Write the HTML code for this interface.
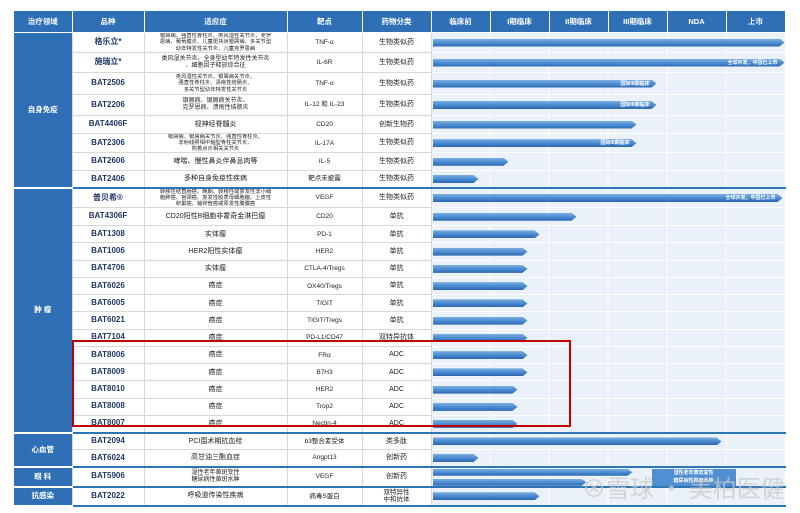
<!DOCTYPE html>
<html><head><meta charset="utf-8"><style>
*{margin:0;padding:0;box-sizing:border-box}
body{width:800px;height:513px;background:#fff;position:relative;overflow:hidden;font-family:"Liberation Sans","Noto Sans CJK SC",sans-serif;color:#1f3864}
table{position:absolute;left:14px;top:11px;border-collapse:collapse;table-layout:fixed;width:771px}
td{border:1px solid #d9d9d9;text-align:center;vertical-align:middle;font-size:7.5px;line-height:1.1;overflow:hidden;padding:0;white-space:nowrap}
th{background:#2e6fb5;color:#fff;font-size:7.5px;font-weight:bold;height:21px;border-right:1px solid #fff;border-bottom:1px solid #fff}
td.cat{background:#2e6fb5;color:#fff;font-weight:bold;font-size:7.5px;border:none;border-bottom:2px solid #fff}
td.n{font-weight:bold;font-size:8px;color:#1f3864}
td.i{color:#222;font-size:7px}
td.s{font-size:5.3px;line-height:1.15;color:#222}
td.t{color:#222;font-size:6.5px}
td.c{color:#222;font-size:7px}
td.st{background:#eaf1f8 repeating-linear-gradient(90deg,transparent 0,transparent 58px,#fff 58px,#fff 59px);position:relative;text-align:left;border-color:#fff}
tr.sep td{border-top:2px solid #2e75b6}
.b{position:absolute;left:1px;top:50%;margin-top:-4px;height:8px;background:linear-gradient(#79afe2,#3c7dc8 70%,#2e64a8);clip-path:polygon(0 0,calc(100% - 5px) 0,100% 50%,calc(100% - 5px) 100%,0 100%);color:#fff;font-size:5px;font-weight:bold;text-align:right;padding-right:7px;line-height:8px}
</style></head><body>
<table>
<colgroup><col style="width:58px"><col style="width:72px"><col style="width:143px"><col style="width:75px"><col style="width:69px"><col style="width:354px"></colgroup>
<tr><th>治疗领域</th><th>品种</th><th>适应症</th><th>靶点</th><th>药物分类</th>
<th style="padding:0"><div style="display:flex;height:21px;align-items:center"><span style="flex:1;border-right:1px solid #fff;line-height:21px">临床前</span><span style="flex:1;border-right:1px solid #fff;line-height:21px">I期临床</span><span style="flex:1;border-right:1px solid #fff;line-height:21px">II期临床</span><span style="flex:1;border-right:1px solid #fff;line-height:21px">III期临床</span><span style="flex:1;border-right:1px solid #fff;line-height:21px">NDA</span><span style="flex:1;line-height:21px">上市</span></div></th></tr>
<tr style="height:20px"><td class="cat" rowspan="8">自身免疫</td><td class="n">格乐立*</td><td class="s">银屑病、强直性脊柱炎、类风湿性关节炎、克罗<br>恩病、葡萄膜炎、儿童斑块状银屑病、多关节型<br>幼年特发性关节炎、儿童克罗恩病</td><td class="t">TNF-α</td><td class="c">生物类似药</td><td class="st"><div class="b" style="width:352px"></div></td></tr>
<tr style="height:20px"><td class="n">施瑞立*</td><td class="s" style="font-size:6px">类风湿关节炎、全身型幼年特发性关节炎<br>、细胞因子释放综合征</td><td class="t">IL-6R</td><td class="c">生物类似药</td><td class="st"><div class="b" style="width:352px">全球开发，中国已上市</div></td></tr>
<tr style="height:22px"><td class="n">BAT2506</td><td class="s">类风湿性关节炎、银屑病关节炎、<br>强直性脊柱炎、溃疡性结肠炎、<br>多关节型幼年特发性关节炎</td><td class="t">TNF-α</td><td class="c">生物类似药</td><td class="st"><div class="b" style="width:224px">国际III期临床</div></td></tr>
<tr style="height:21px"><td class="n">BAT2206</td><td class="s" style="font-size:6px">银屑病、银屑病关节炎、<br>克罗恩病、溃疡性结肠炎</td><td class="t">IL-12 和 IL-23</td><td class="c">生物类似药</td><td class="st"><div class="b" style="width:224px">国际III期临床</div></td></tr>
<tr style="height:18px"><td class="n">BAT4406F</td><td class="i">视神经脊髓炎</td><td class="t">CD20</td><td class="c">创新生物药</td><td class="st"><div class="b" style="width:204px"></div></td></tr>
<tr style="height:19px"><td class="n">BAT2306</td><td class="s">银屑病、银屑病关节炎、强直性脊柱炎、<br>非射线照相中轴型脊柱关节炎、<br>附着点炎相关关节炎</td><td class="t">IL-17A</td><td class="c">生物类似药</td><td class="st"><div class="b" style="width:204px">国际III期临床</div></td></tr>
<tr style="height:18px"><td class="n">BAT2606</td><td class="i">哮喘、慢性鼻炎伴鼻息肉等</td><td class="t">IL-5</td><td class="c">生物类似药</td><td class="st"><div class="b" style="width:76px"></div></td></tr>
<tr style="height:17px"><td class="n">BAT2406</td><td class="i">多种自身免疫性疾病</td><td class="t">靶点未披露</td><td class="c">生物类似药</td><td class="st"><div class="b" style="width:46px"></div></td></tr>
<tr class="sep" style="height:20px"><td class="cat" rowspan="14">肿 瘤</td><td class="n">普贝希®</td><td class="s">转移性结直肠癌、晚期、转移性或复发性非小细<br>胞肺癌、宫颈癌、复发性胶质母细胞瘤、上皮性<br>卵巢癌、输卵管癌或原发性腹膜癌</td><td class="t">VEGF</td><td class="c">生物类似药</td><td class="st"><div class="b" style="width:350px">全球开发，中国已上市</div></td></tr>
<tr style="height:18px"><td class="n">BAT4306F</td><td class="i">CD20阳性B细胞非霍奇金淋巴瘤</td><td class="t">CD20</td><td class="c">单抗</td><td class="st"><div class="b" style="width:144px"></div></td></tr>
<tr style="height:17.25px"><td class="n">BAT1308</td><td class="i">实体瘤</td><td class="t">PD-1</td><td class="c">单抗</td><td class="st"><div class="b" style="width:107px"></div></td></tr>
<tr style="height:17.25px"><td class="n">BAT1006</td><td class="i">HER2阳性实体瘤</td><td class="t">HER2</td><td class="c">单抗</td><td class="st"><div class="b" style="width:95px"></div></td></tr>
<tr style="height:17.25px"><td class="n">BAT4706</td><td class="i">实体瘤</td><td class="t">CTLA-4/Tregs</td><td class="c">单抗</td><td class="st"><div class="b" style="width:95px"></div></td></tr>
<tr style="height:17.25px"><td class="n">BAT6026</td><td class="i">癌症</td><td class="t">OX40/Tregs</td><td class="c">单抗</td><td class="st"><div class="b" style="width:95px"></div></td></tr>
<tr style="height:17.25px"><td class="n">BAT6005</td><td class="i">癌症</td><td class="t">TIGIT</td><td class="c">单抗</td><td class="st"><div class="b" style="width:95px"></div></td></tr>
<tr style="height:17.25px"><td class="n">BAT6021</td><td class="i">癌症</td><td class="t">TIGIT/Tregs</td><td class="c">单抗</td><td class="st"><div class="b" style="width:95px"></div></td></tr>
<tr style="height:17.25px"><td class="n">BAT7104</td><td class="i">癌症</td><td class="t">PD-L1/CD47</td><td class="c">双特异抗体</td><td class="st"><div class="b" style="width:95px"></div></td></tr>
<tr style="height:17.25px"><td class="n">BAT8006</td><td class="i">癌症</td><td class="t">FRα</td><td class="c">ADC</td><td class="st"><div class="b" style="width:95px"></div></td></tr>
<tr style="height:17.25px"><td class="n">BAT8009</td><td class="i">癌症</td><td class="t">B7H3</td><td class="c">ADC</td><td class="st"><div class="b" style="width:95px"></div></td></tr>
<tr style="height:17.25px"><td class="n">BAT8010</td><td class="i">癌症</td><td class="t">HER2</td><td class="c">ADC</td><td class="st"><div class="b" style="width:85px"></div></td></tr>
<tr style="height:17.25px"><td class="n">BAT8008</td><td class="i">癌症</td><td class="t">Trop2</td><td class="c">ADC</td><td class="st"><div class="b" style="width:85px"></div></td></tr>
<tr style="height:17.25px"><td class="n">BAT8007</td><td class="i">癌症</td><td class="t">Nectin-4</td><td class="c">ADC</td><td class="st"><div class="b" style="width:85px"></div></td></tr>
<tr class="sep" style="height:17px"><td class="cat" rowspan="2">心血管</td><td class="n">BAT2094</td><td class="i">PCI围术期抗血栓</td><td class="t">b3整合素受体</td><td class="c">类多肽</td><td class="st"><div class="b" style="width:289px"></div></td></tr>
<tr style="height:17px"><td class="n">BAT6024</td><td class="i">高甘油三酯血症</td><td class="t">Angpt13</td><td class="c">创新药</td><td class="st"><div class="b" style="width:46px"></div></td></tr>
<tr class="sep" style="height:20px"><td class="cat">眼 科</td><td class="n">BAT5906</td><td class="s" style="font-size:6px">湿性老年黄斑变性<br>糖尿病性黄斑水肿</td><td class="t">VEGF</td><td class="c">创新药</td><td class="st"><div class="b" style="width:200px;top:5px;height:7px"></div><div class="b" style="width:154px;top:15px;height:7px"></div><div style="position:absolute;left:220px;top:1px;width:84px;height:17px;background:#4f8fd2;color:#fff;font-size:5px;font-weight:bold;text-align:center;line-height:8px">湿性老年黄斑变性<br>糖尿病性黄斑水肿</div></td></tr>
<tr class="sep" style="height:19px;border-bottom:2px solid #2e75b6"><td class="cat">抗感染</td><td class="n">BAT2022</td><td class="i">呼吸道传染性疾病</td><td class="t">病毒S蛋白</td><td class="s" style="font-size:6.5px">双特异性<br>中和抗体</td><td class="st"><div class="b" style="width:107px"></div></td></tr>
</table>
<div style="position:absolute;left:72px;top:340px;width:499px;height:87px;border:2.5px solid #c00000"></div>
<div style="position:absolute;left:582px;top:472px;font-size:24px;line-height:30px;color:rgba(200,200,200,0.75);font-family:'Noto Sans CJK SC',sans-serif;white-space:nowrap">⊗雪球 · 美柏医健</div>
</body></html>
